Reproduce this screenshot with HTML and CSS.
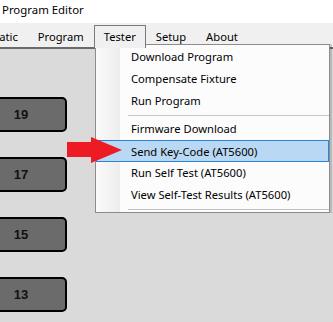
FILE: index.html
```
<!DOCTYPE html>
<html lang="en">
<head>
    <meta charset="UTF-8">
    <title>Program Editor</title>
    <link rel="stylesheet" href="styles.css">
</head>
<body>
    <div class="window">
        <div class="titlebar">Program Editor</div>
        <div class="menubar">
            <span class="menu">Schematic</span>
            <span class="menu">Program</span>
            <span class="menu open">Tester</span>
            <span class="menu">Setup</span>
            <span class="menu">About</span>
        </div>
        <div class="content">
            <div class="nodes">
                <div class="node">19</div>
                <div class="node">17</div>
                <div class="node">15</div>
                <div class="node">13</div>
            </div>
        </div>

        <!-- open Tester menu -->
        <div class="dropdown">
            <div class="item">Download Program</div>
            <div class="item">Compensate Fixture</div>
            <div class="item">Run Program</div>
            <div class="sep"></div>
            <div class="item">Firmware Download</div>
            <div class="item selected">Send Key-Code (AT5600)</div>
            <div class="item">Run Self Test (AT5600)</div>
            <div class="item">View Self-Test Results (AT5600)</div>
            <div class="sep"></div>
        </div>

        <svg class="arrow" width="56" height="28" viewBox="0 0 56 28">
            <polygon points="0,5 24,5 24,0 55,13 24,26 24,20 0,20" fill="#ed1c24"/>
        </svg>
    </div>
</body>
</html>
```
FILE: styles.css
```
* {
    margin: 0;
    padding: 0;
    box-sizing: border-box;
}

body {
    width: 333px;
    height: 322px;
    overflow: hidden;
    font-family: "Noto Sans", "Open Sans", sans-serif;
    font-size: 11.2px;
    color: #000;
    background: #dadada;
}

.window {
    position: relative;
    height: 322px;
}

.titlebar {
    height: 23px;
    line-height: 20px;
    padding-left: 2px;
    font-size: 11.4px;
    background: #fff;
}

.menubar {
    display: flex;
    height: 24px;
    margin-left: -46px;
    background: #f0f0f0;
}

.menu {
    padding: 0 9px;
    line-height: 22px;
    margin-top: 2px;
    border: 1px solid transparent;
    border-bottom: none;
}

.menu.open {
    position: relative;
    z-index: 2;
    height: 23px;
    border-color: #7a7a7a;
    background: #f0f0f0;
}

.content {
    height: 275px;
    border-top: 2px solid #6a6a6a;
}

.nodes {
    display: flex;
    flex-direction: column;
    gap: 25px;
    padding-top: 48px;
    margin-left: -25px;
}

.node {
    width: 92px;
    height: 35px;
    line-height: 31px;
    text-align: center;
    font-family: "Liberation Sans", Arial, sans-serif;
    font-weight: bold;
    font-size: 13px;
    color: #111;
    background: #6b6b6b;
    border: 2px solid #000;
    border-radius: 5px;
}

.dropdown {
    position: absolute;
    left: 95px;
    top: 44px;
    width: 235px;
    padding-top: 1px;
    border: 1px solid #8c8c8c;
    box-shadow: 2px 0 0 rgba(0, 0, 0, 0.15);
    background: linear-gradient(to right, #fafafa 0, #ededed 24px, #fcfcfc 24px);
    z-index: 1;
}

.item {
    height: 22px;
    line-height: 21px;
    padding-left: 35px;
    white-space: nowrap;
}

.item.selected {
    padding-left: 34px;
    background: #b9d8f3;
    border: 1px solid #2b82d9;
}

.sep {
    height: 6px;
    margin-left: 32px;
    background: linear-gradient(#c4c4c4, #c4c4c4) center / 100% 1px no-repeat;
}

.arrow {
    position: absolute;
    left: 67px;
    top: 137px;
    z-index: 3;
}
```
